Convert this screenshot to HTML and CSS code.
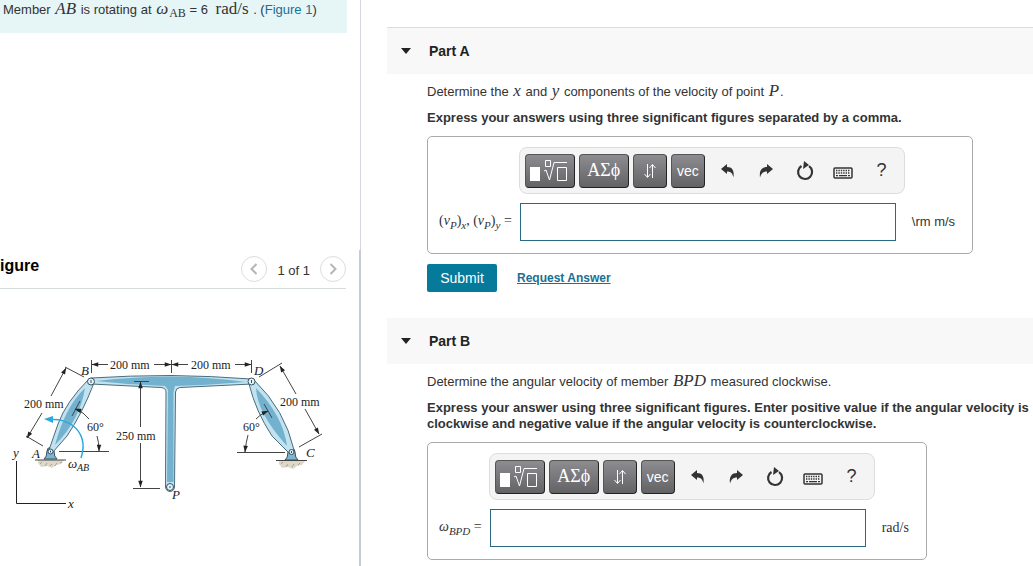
FILE: index.html
```html
<!DOCTYPE html>
<html lang="en">

<head>
    <meta charset="UTF-8">
    <meta name="viewport" content="width=device-width, initial-scale=1.0">
    <title>Velocity of point P</title>
    <link rel="stylesheet" href="styles.css">
</head>

<body>
    <!-- shared icons -->
    <svg class="sprite" width="0" height="0" aria-hidden="true">
        <symbol id="i-root" viewBox="0 0 40 22">
            <rect x="0" y="7" width="10" height="14" fill="#fff" />
            <path d="M15.5 .5h5v6h-5zM14 11l2-1 3.500 10L24 2.500h13M27.500 7.500h9v13h-9z" fill="none" stroke="#fff" />
        </symbol>
        <symbol id="i-arrows" viewBox="0 0 14 16">
            <path d="M4.500 1v13M1.500 11l3 3.500 3-3.500M9.500 15V2M6.500 5l3-3.500 3 3.500" fill="none" stroke="#fff" />
        </symbol>
        <symbol id="i-undo" viewBox="0 0 16 16">
            <path d="M1 6L7 1v3c5 0 7.500 3 6.500 10.500C12.500 10.500 11 8.500 7 8.500V11z" />
        </symbol>
        <symbol id="i-redo" viewBox="0 0 16 16">
            <path d="M15 6L9 1v3C4 4 1 7 2 14.500 3.200 10.500 5 8.500 9 8.500V11z" />
        </symbol>
        <symbol id="i-reset" viewBox="0 0 18 20">
            <path d="M5.500 5A7 7 0 1 0 13 5.200" fill="none" stroke="#333" stroke-width="2.200" />
            <path d="M8 0l5 4-6 4z" />
        </symbol>
        <symbol id="i-keyboard" viewBox="0 0 20 12">
            <rect x="1" y="1" width="18" height="10" rx="1" fill="none" stroke="#333" stroke-width="1.500" />
            <path d="M3 3.500h14M3 6h14" fill="none" stroke="#333" stroke-width="1.400" stroke-dasharray="1.400 1" />
            <path d="M3 8.700h2M6 8.700h8M15 8.700h2" fill="none" stroke="#333" stroke-width="1.300" />
        </symbol>
    </svg>

    <div class="page">
        <aside class="left">
            <div class="problem_pane">
                <p class="problem">Member <i class="math">AB</i> is rotating at <i class="math">ω</i><span class="math_sub">AB</span> = 6 <span class="math_unit">rad/s</span> . (<a href="#figure">Figure 1</a>)</p>
            </div>
            <div class="figure_pane" id="figure">
                <div class="figure_head">
                    <h2>igure</h2>
                    <div class="pager">
                        <button class="round" type="button" aria-label="Previous figure"><svg width="10" height="14" viewBox="0 0 10 14"><path d="M7.500 2L2.500 7l5 5" /></svg></button>
                        <span>1 of 1</span>
                        <button class="round" type="button" aria-label="Next figure"><svg width="10" height="14" viewBox="0 0 10 14"><path d="M2.500 2l5 5-5 5" /></svg></button>
                    </div>
                </div>
                <svg class="drawing" width="340" height="170" viewBox="0 345 340 170" role="img" aria-label="Linkage with members AB, BPD and CD">
                    <defs>
                        <marker id="head" viewBox="0 0 8 6" refX="7.500" refY="3" markerWidth="8" markerHeight="5" orient="auto-start-reverse" markerUnits="userSpaceOnUse">
                            <path d="M0 .3L8 3 0 5.700z" fill="#222" />
                        </marker>
                    </defs>
                    <!-- ground -->
                    <g fill="#ddd8c8">
                        <path d="M38 460h26l-3 4-5 1-4 3-5-2-6 1-3-4z" />
                        <path d="M279 461h26l-3 4-5 1-4 3-5-2-6 1-3-4z" />
                    </g>
                    <path d="M40 464l2-2M45 466l2-3M50 466l2-2M55 466l2-3M60 463l2-1M281 464l2-2M286 467l2-3M292 467l2-3M298 465l2-2" stroke="#aaa491" fill="none" />
                    <g class="support">
                        <path d="M44 459q3-2 3-8a3.500 3.500 0 0 1 7 0q0 6 3 8z" />
                        <path d="M285 460q3-2 3-8a3.500 3.500 0 0 1 7 0q0 6 3 8z" />
                    </g>
                    <path d="M35 460h31M276 460.500h31" stroke="#444" />
                    <!-- members -->
                    <g class="member">
                        <path d="M88 380Q66 402 58 424L49 450 53 452 67 436Q82 414 94 383z" />
                        <path d="M249 384Q256 412 272 436L289 453 294 450Q285 410 254 380z" />
                        <path d="M91 378Q130 375.500 171 375.500 212 376 251 379L252 384 180 387.500Q176 388 175.500 392L174.500 487a4.500 4.500 0 0 1-9 0L166 392Q166 388 161 387.500L91 384z" />
                    </g>
                    <g class="core">
                        <path d="M85 388Q65 407 55 445 80 420 85 388z" />
                        <path d="M256 388Q257 413 287 446 283 416 256 388z" />
                        <path d="M96 381Q135 376.500 171 376.500 210 377 246 382 210 385 175 386L173.500 392V482H167L168 390 165 386Q130 385 96 381z" />
                    </g>
                    <g class="pin">
                        <circle cx="91" cy="381.500" r="3.500" />
                        <circle cx="251.500" cy="381.500" r="3.500" />
                        <circle cx="50.500" cy="451.500" r="2.500" />
                        <circle cx="291.500" cy="452" r="2.500" />
                        <circle cx="170" cy="487" r="3.500" />
                        <path d="M91 380v3M251.500 380v3M50.500 450.500v2M291.500 451v2M170 486v2" />
                    </g>
                    <!-- dimension lines -->
                    <g class="dim">
                        <path d="M91.500 360v13M171.500 360v13M251.500 360v13M65 367l19 10M26 436l17 10M282 363l-23 14M322 434l-23 13M134 381.500h15M133 488.500h27M59 451.500h50M237 452.500h48M72 416l8-15M264 404l8 14" />
                        <g marker-end="url(#head)">
                            <path d="M108 364.500H92" />
                            <path d="M154 364.500h17" />
                            <path d="M188 364.500h-16" />
                            <path d="M235 364.500h16" />
                            <path d="M51 396l15-28" />
                            <path d="M42 413L27 438" />
                            <path d="M140.500 427v-45" />
                            <path d="M140.500 443v44" />
                            <path d="M296 394l-16-28" />
                            <path d="M305 409l14 25" />
                            <path d="M89 419q-5-7-14-10" />
                            <path d="M97 436q2 6 2 15" />
                            <path d="M256 419q3-4 12-8" />
                            <path d="M248 435q-2 7-3 17" />
                        </g>
                    </g>
                    <path d="M16.500 461v42.500H66" fill="none" stroke="#222" />
                    <path d="M81 458Q88 437 72 425 63 419 52 419.500" fill="none" stroke="#2ba8dc" stroke-width="1.500" />
                    <path d="M44 419l9-3v7z" fill="#2ba8dc" />
                    <g class="dim_text">
                        <text x="110" y="369">200 mm</text>
                        <text x="191" y="369">200 mm</text>
                        <text x="24" y="408">200 mm</text>
                        <text x="280" y="406">200 mm</text>
                        <text x="116" y="440">250 mm</text>
                        <text x="87" y="431">60°</text>
                        <text x="243" y="431">60°</text>
                    </g>
                    <g class="point_text">
                        <text x="81" y="375">B</text>
                        <text x="254" y="375">D</text>
                        <text x="32" y="458">A</text>
                        <text x="306" y="457">C</text>
                        <text x="172" y="499">P</text>
                        <text x="13" y="457">y</text>
                        <text x="68" y="508">x</text>
                        <text x="68" y="468">ω</text>
                        <text class="small" x="77" y="471">AB</text>
                    </g>
                </svg>
            </div>
        </aside>

        <main class="right">
            <section class="part">
                <h2 class="part_head first"><button class="toggle" type="button">Part A</button></h2>
                <div class="part_body">
                    <p>Determine the <i class="math">x</i> and <i class="math">y</i> components of the velocity of point <i class="math">P</i>.</p>
                    <p class="bold">Express your answers using three significant figures separated by a comma.</p>
                    <div class="answer">
                        <div class="toolbar">
                            <button class="key wide" type="button" aria-label="Templates"><svg width="40" height="22"><use href="#i-root" /></svg></button>
                            <button class="key wide greek" type="button">ΑΣϕ</button>
                            <button class="key" type="button" aria-label="Subscripts and arrows"><svg width="14" height="16"><use href="#i-arrows" /></svg></button>
                            <button class="key" type="button">vec</button>
                            <div class="tools">
                                <button class="tool" type="button" aria-label="Undo"><svg width="16" height="16"><use href="#i-undo" /></svg></button>
                                <button class="tool" type="button" aria-label="Redo"><svg width="16" height="16"><use href="#i-redo" /></svg></button>
                                <button class="tool" type="button" aria-label="Reset"><svg width="18" height="20"><use href="#i-reset" /></svg></button>
                                <button class="tool" type="button" aria-label="Keyboard shortcuts"><svg class="kbd" width="20" height="12"><use href="#i-keyboard" /></svg></button>
                                <button class="tool" type="button">?</button>
                            </div>
                        </div>
                        <label class="name" for="ansA"><span>(<i>v</i><sub>P</sub>)<sub>x</sub>,</span> <span>(<i>v</i><sub>P</sub>)<sub>y</sub></span> <span class="eq">=</span></label>
                        <input class="value" id="ansA" type="text">
                        <span class="unit">\rm m/s</span>
                    </div>
                    <div class="actions">
                        <button class="submit" type="button">Submit</button>
                        <a href="#answer">Request Answer</a>
                    </div>
                </div>
            </section>

            <section class="part">
                <h2 class="part_head"><button class="toggle" type="button">Part B</button></h2>
                <div class="part_body">
                    <p>Determine the angular velocity of member <i class="math">BPD</i> measured clockwise.</p>
                    <p class="bold">Express your answer using three significant figures. Enter positive value if the angular velocity is<br>clockwise and negative value if the angular velocity is counterclockwise.</p>
                    <div class="answer">
                        <div class="toolbar">
                            <button class="key wide" type="button" aria-label="Templates"><svg width="40" height="22"><use href="#i-root" /></svg></button>
                            <button class="key wide greek" type="button">ΑΣϕ</button>
                            <button class="key" type="button" aria-label="Subscripts and arrows"><svg width="14" height="16"><use href="#i-arrows" /></svg></button>
                            <button class="key" type="button">vec</button>
                            <div class="tools">
                                <button class="tool" type="button" aria-label="Undo"><svg width="16" height="16"><use href="#i-undo" /></svg></button>
                                <button class="tool" type="button" aria-label="Redo"><svg width="16" height="16"><use href="#i-redo" /></svg></button>
                                <button class="tool" type="button" aria-label="Reset"><svg width="18" height="20"><use href="#i-reset" /></svg></button>
                                <button class="tool" type="button" aria-label="Keyboard shortcuts"><svg class="kbd" width="20" height="12"><use href="#i-keyboard" /></svg></button>
                                <button class="tool" type="button">?</button>
                            </div>
                        </div>
                        <label class="name" for="ansB"><span><i>ω</i><sub>BPD</sub></span> <span class="eq">=</span></label>
                        <input class="value" id="ansB" type="text">
                        <span class="unit serif">rad/s</span>
                    </div>
                </div>
            </section>
        </main>
    </div>
</body>

</html>
```
FILE: styles.css
```css
* {
    margin: 0;
    padding: 0;
    box-sizing: border-box;
}

body {
    font-family: "Liberation Sans", Arial, sans-serif;
    font-size: 13px;
    line-height: 16px;
    color: #333;
    background: #fff;
    overflow: hidden;
}

button {
    font-family: inherit;
    border: none;
    background: none;
    cursor: pointer;
}

a {
    color: #1b6f93;
}

.sprite {
    display: block;
}

.page {
    display: grid;
    grid-template-columns: 361px 1fr;
    min-height: 100vh;
}

.math,
.math_sub,
.math_unit {
    font-family: "Liberation Serif", "Times New Roman", serif;
    font-size: 17px;
    line-height: 12px;
}

.math {
    padding: 0 1px;
}

.math_sub {
    font-size: 12px;
    vertical-align: -3px;
}

.math_unit {
    padding: 0 1px 0 4px;
}

/* left side */
.left {
    display: flex;
    flex-direction: column;
}

.problem_pane {
    height: 250px;
    border-right: 1px solid #d5d9de;
}

.problem {
    margin-right: 13px;
    padding: 2px 3px 14px;
    background: #e6f5f6;
}

.problem a {
    text-decoration: none;
}

.figure_pane {
    flex: 1;
    border-right: 2px solid #c5ccd6;
}

.figure_head {
    display: flex;
    justify-content: space-between;
    align-items: center;
    height: 39px;
    margin-right: 13px;
    border-bottom: 1px solid #d5dadd;
}

.figure_head h2 {
    font-size: 16px;
    color: #000;
    padding-bottom: 6px;
}

.pager {
    display: flex;
    align-items: center;
    gap: 10px;
}

.pager span {
    padding-top: 4px;
}

.round {
    display: flex;
    justify-content: center;
    align-items: center;
    width: 26px;
    height: 26px;
    border: 1px solid #ddd;
    border-radius: 50%;
}

.round path {
    fill: none;
    stroke: #b5b5b5;
    stroke-width: 2;
}

/* figure drawing */
.drawing {
    display: block;
    margin-top: 56px;
}

.support path {
    fill: #7fb6cf;
    stroke: #35505e;
}

.member path {
    fill: #c3e2ef;
    stroke: #4a6d7d;
}

.core path {
    fill: #72b2cf;
}

.pin circle {
    fill: #e4f1f6;
    stroke: #35505e;
}

.pin path {
    stroke: #35505e;
}

.dim path {
    fill: none;
    stroke: #444;
}

.dim_text,
.point_text {
    font-family: "Liberation Serif", "Times New Roman", serif;
    font-size: 12px;
    fill: #222;
}

.point_text {
    font-size: 13px;
    font-style: italic;
}

.point_text .small {
    font-size: 10px;
}

/* right side */
.right {
    padding: 27px 0 0 26px;
}

.part_head {
    height: 46px;
    padding-left: 14px;
    background: #f8f8f8;
}

.part_head.first {
    height: 47px;
    border-top: 1px solid #ddd;
}

.toggle {
    display: flex;
    align-items: center;
    gap: 18px;
    height: 100%;
    font-size: 14px;
    font-weight: bold;
    color: #222;
}

.toggle::before {
    content: "";
    border: 5px solid transparent;
    border-top: 6px solid #222;
    border-bottom: none;
}

.part_body {
    padding: 10px 0 26px 40px;
}

.part_body p {
    margin-bottom: 10px;
}

.part_body .bold {
    font-weight: bold;
}

.answer {
    display: grid;
    grid-template-columns: auto 386px auto;
    column-gap: 7px;
    row-gap: 9px;
    align-items: center;
    width: fit-content;
    padding: 10px 17px 12px 11px;
    border: 1px solid #aaa;
    border-radius: 5px;
}

.toolbar {
    grid-column: 2;
    display: flex;
    align-items: center;
    gap: 4px;
    height: 47px;
    padding: 0 3px 0 5px;
    background: #f4f4f4;
    border: 1px solid #ddd;
    border-radius: 8px;
}

.key {
    display: flex;
    justify-content: center;
    align-items: center;
    width: 34px;
    height: 34px;
    font-size: 14px;
    color: #fff;
    background: linear-gradient(#8d8d91, #636366);
    border: 1px solid #555;
    border-right-color: #222;
    border-bottom-color: #222;
    border-radius: 4px;
}

.wide {
    width: 50px;
}

.greek {
    font-family: "Liberation Serif", "Times New Roman", serif;
    font-size: 18px;
}

.tools {
    flex: 1;
    display: flex;
}

.tool {
    flex: 1;
    display: flex;
    justify-content: center;
    align-items: center;
    height: 34px;
    font-size: 18px;
    color: #333;
    fill: #333;
}

.kbd {
    margin-top: 4px;
}

.name {
    grid-column: 1;
    font-family: "Liberation Serif", "Times New Roman", serif;
    font-size: 14px;
    white-space: nowrap;
}

.name sub {
    font-size: 11px;
    font-style: italic;
    line-height: 1;
}

.value {
    width: 376px;
    height: 38px;
    margin-left: 1px;
    padding: 0 8px;
    font-size: 16px;
    border: 1px solid #2b6b82;
    outline: none;
}

.unit {
    grid-column: 3;
}

.serif {
    font-family: "Liberation Serif", "Times New Roman", serif;
    font-size: 14px;
}

.actions {
    display: flex;
    align-items: center;
    gap: 20px;
    margin-top: 10px;
}

.submit {
    width: 70px;
    height: 28px;
    font-size: 14px;
    color: #fff;
    background: #067a9b;
    border-radius: 2px;
}

.actions a {
    font-size: 12px;
    font-weight: bold;
}
```
